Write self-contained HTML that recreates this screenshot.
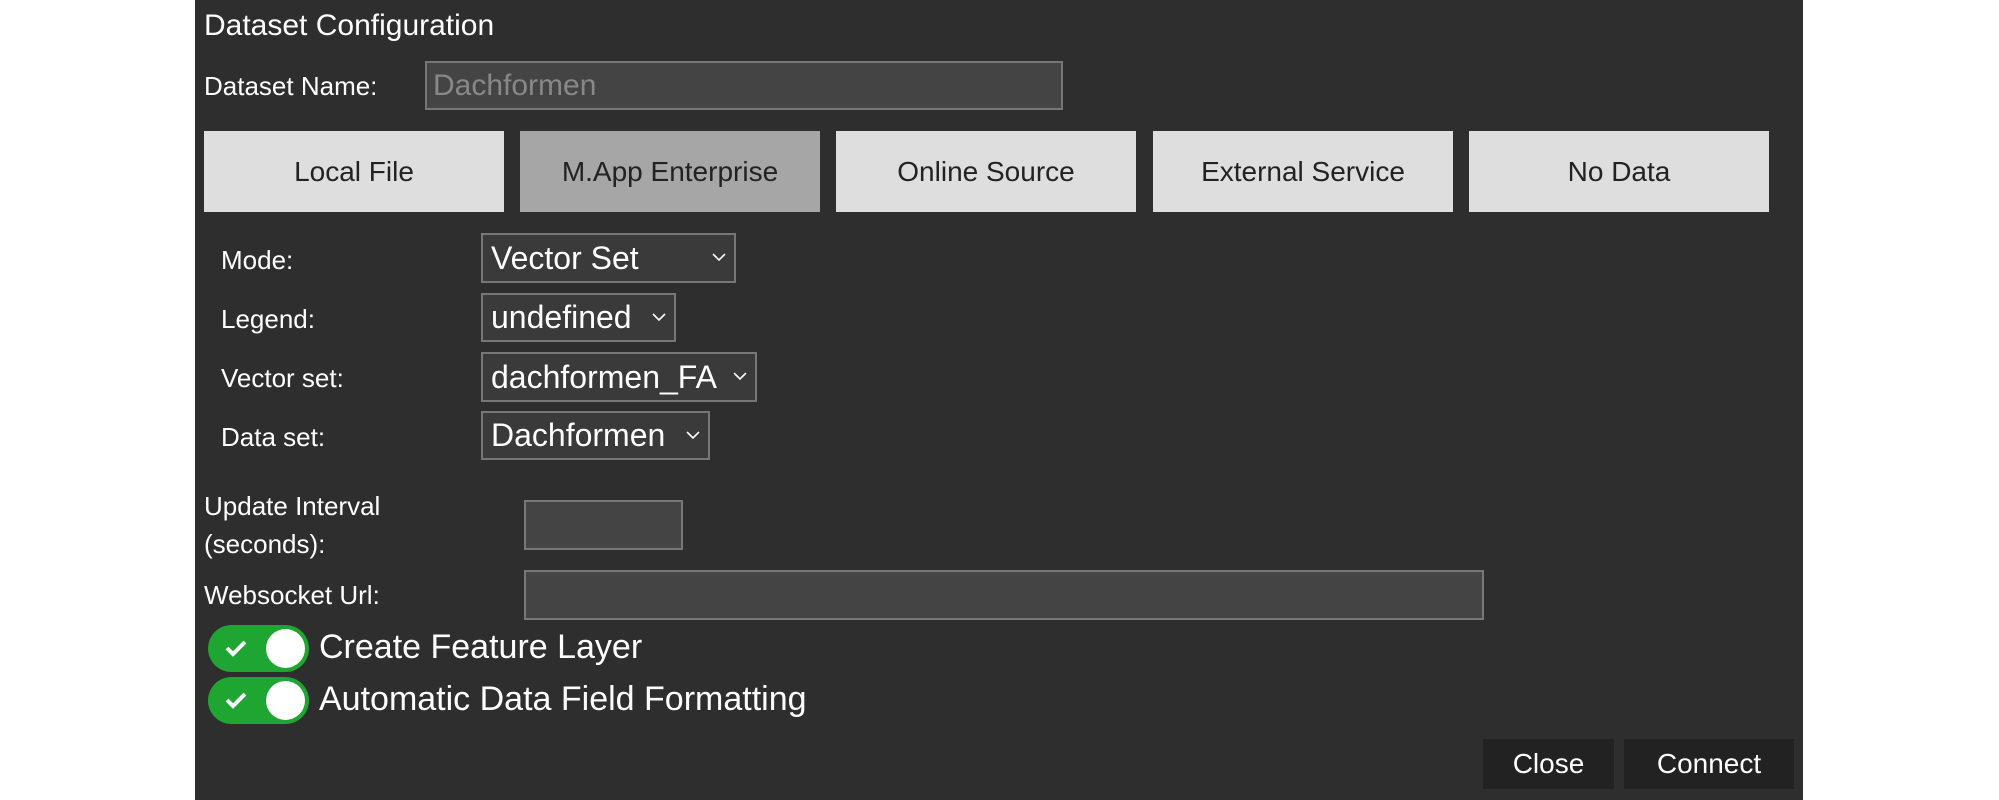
<!DOCTYPE html><html><head><style>
body{margin:0;width:1999px;height:800px;background:#fff;position:relative;overflow:hidden;font-family:"Liberation Sans","DejaVu Sans",sans-serif;color:#fff}
.p{position:absolute;left:195px;top:0;width:1608px;height:800px;background:#2e2e2e}
.a{position:absolute;white-space:nowrap}
.in{position:absolute;background:#444;border:2px solid #777;box-sizing:border-box}
.b{position:absolute;top:131px;width:300px;height:81px;background:#dedede;color:#222;font-size:28px;display:flex;align-items:center;justify-content:center}
.s{position:absolute;left:481px;background:#3a3a3a;border:2px solid #777;box-sizing:border-box;font-size:32px;padding-left:8px;display:flex;align-items:center}
.s svg{position:absolute;right:8px;top:50%;margin-top:-5px}
.l{font-size:26px}
.t{position:absolute;left:208px;width:101px;height:47px;border-radius:24px;background:#1fa531}
.t:after{content:"";position:absolute;right:4px;top:4px;width:39px;height:39px;border-radius:50%;background:#fff}
.t svg{position:absolute;left:17px;top:14px}
.c{position:absolute;top:739px;height:50px;background:#222;font-size:28px;display:flex;align-items:center;justify-content:center}
</style></head><body>
<div class="p"></div>
<div class="a" style="left:204px;top:9px;font-size:30px">Dataset Configuration</div>
<div class="a l" style="left:204px;top:71px">Dataset Name:</div>
<div class="in" style="left:425px;top:61px;width:638px;height:49px;color:#888;font-size:30px;padding:6px 6px">Dachformen</div>
<div class="b" style="left:204px">Local File</div>
<div class="b" style="left:520px;background:#a6a6a6">M.App Enterprise</div>
<div class="b" style="left:836px">Online Source</div>
<div class="b" style="left:1153px">External Service</div>
<div class="b" style="left:1469px">No Data</div>
<div class="a l" style="left:221px;top:245px">Mode:</div>
<div class="a l" style="left:221px;top:304px">Legend:</div>
<div class="a l" style="left:221px;top:363px">Vector set:</div>
<div class="a l" style="left:221px;top:422px">Data set:</div>
<div class="s" style="top:233px;width:255px;height:50px">Vector Set<svg width="14" height="9"><path d="M1 1l6 6 6-6" stroke="#fff" stroke-width="1.6" fill="none"/></svg></div>
<div class="s" style="top:293px;width:195px;height:49px">undefined<svg width="14" height="9"><path d="M1 1l6 6 6-6" stroke="#fff" stroke-width="1.6" fill="none"/></svg></div>
<div class="s" style="top:352px;width:276px;height:50px">dachformen_FA<svg width="14" height="9"><path d="M1 1l6 6 6-6" stroke="#fff" stroke-width="1.6" fill="none"/></svg></div>
<div class="s" style="top:411px;width:229px;height:49px">Dachformen<svg width="14" height="9"><path d="M1 1l6 6 6-6" stroke="#fff" stroke-width="1.6" fill="none"/></svg></div>
<div class="a l" style="left:204px;top:487px;line-height:38px">Update Interval<br>(seconds):</div>
<div class="in" style="left:524px;top:500px;width:159px;height:50px"></div>
<div class="a l" style="left:204px;top:580px">Websocket Url:</div>
<div class="in" style="left:524px;top:570px;width:960px;height:50px"></div>
<div class="t" style="top:625px"><svg width="22" height="18"><path d="M2 9l6 6L20 3" stroke="#fff" stroke-width="4" fill="none"/></svg></div>
<div class="a" style="left:319px;top:628px;font-size:34px">Create Feature Layer</div>
<div class="t" style="top:677px"><svg width="22" height="18"><path d="M2 9l6 6L20 3" stroke="#fff" stroke-width="4" fill="none"/></svg></div>
<div class="a" style="left:319px;top:680px;font-size:34px">Automatic Data Field Formatting</div>
<div class="c" style="left:1483px;width:131px">Close</div>
<div class="c" style="left:1624px;width:170px">Connect</div>
</body></html>
